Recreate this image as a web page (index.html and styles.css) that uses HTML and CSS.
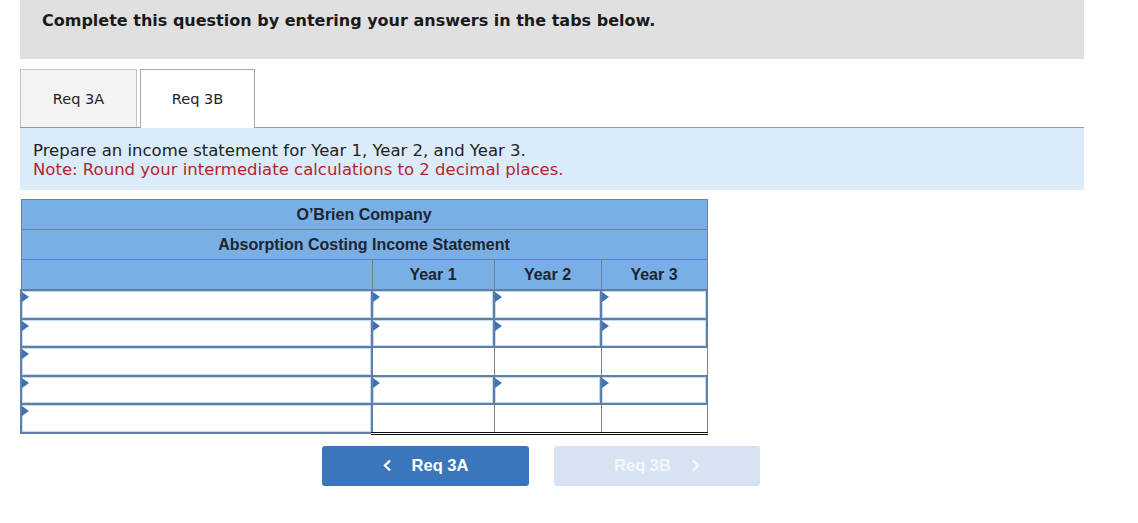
FILE: index.html
```html
<!DOCTYPE html>
<html>
<head>
<meta charset="utf-8">
<link rel="stylesheet" href="styles.css">
</head>
<body>
<div class="page">
  <div class="banner">Complete this question by entering your answers in the tabs below.</div>
  <div class="tabs">
    <div class="tab">Req 3A</div>
    <div class="tab active">Req 3B</div>
  </div>
  <div class="prompt">
    <div>Prepare an income statement for Year 1, Year 2, and Year 3.</div>
    <div class="note">Note: Round your intermediate calculations to 2 decimal places.</div>
  </div>
  <table class="stmt">
    <colgroup>
      <col class="c-label"><col class="c-y1"><col class="c-y2"><col class="c-y3">
    </colgroup>
    <tr class="hdr"><th colspan="4">O’Brien Company</th></tr>
    <tr class="hdr"><th colspan="4">Absorption Costing Income Statement</th></tr>
    <tr class="hdr"><th></th><th>Year 1</th><th>Year 2</th><th>Year 3</th></tr>
    <tr>
      <td class="inp"><span class="flag"></span></td>
      <td class="inp"><span class="flag"></span></td>
      <td class="inp"><span class="flag"></span></td>
      <td class="inp"><span class="flag"></span></td>
    </tr>
    <tr>
      <td class="inp"><span class="flag"></span></td>
      <td class="inp"><span class="flag"></span></td>
      <td class="inp"><span class="flag"></span></td>
      <td class="inp"><span class="flag"></span></td>
    </tr>
    <tr class="plain">
      <td class="inp"><span class="flag"></span></td>
      <td class="cell"></td>
      <td class="cell"></td>
      <td class="cell"></td>
    </tr>
    <tr>
      <td class="inp"><span class="flag"></span></td>
      <td class="inp"><span class="flag"></span></td>
      <td class="inp"><span class="flag"></span></td>
      <td class="inp"><span class="flag"></span></td>
    </tr>
    <tr class="plain total">
      <td class="inp"><span class="flag"></span></td>
      <td class="cell"></td>
      <td class="cell"></td>
      <td class="cell"></td>
    </tr>
  </table>
  <div class="nav">
    <button class="btn prev"><svg class="chev" width="9" height="13" viewBox="0 0 9 13"><path d="M7 1.5 L2 6.5 L7 11.5" fill="none" stroke="currentColor" stroke-width="2.4"/></svg>Req 3A</button>
    <button class="btn next">Req 3B<svg class="chev" width="9" height="13" viewBox="0 0 9 13"><path d="M2 1.5 L7 6.5 L2 11.5" fill="none" stroke="currentColor" stroke-width="2.4"/></svg></button>
  </div>
</div>
</body>
</html>
```
FILE: styles.css
```css
html, body {
  margin: 0;
  padding: 0;
  background: #ffffff;
}
.page {
  margin-left: 20px;
  width: 1064px;
  font-family: "DejaVu Sans", Verdana, sans-serif;
  color: #222;
}
.banner {
  background: #e0e0e0;
  height: 59px;
  box-sizing: border-box;
  padding: 10px 0 0 22px;
  font-weight: bold;
  font-size: 16px;
  line-height: 21px;
  color: #1a1a1a;
}
.tabs {
  margin-top: 10px;
  display: flex;
  gap: 3px;
  border-bottom: 1px solid #9a9a9a;
  height: 58px;
}
.tab {
  width: 117px;
  box-sizing: border-box;
  height: 58px;
  border: 1px solid #c4c4c4;
  border-bottom: none;
  background: #f3f3f3;
  font-size: 14.5px;
  display: flex;
  align-items: center;
  justify-content: center;
  color: #222;
}
.tab.active {
  width: 115px;
  background: #ffffff;
  border-color: #a8a8a8;
  height: 59px;
  margin-bottom: -1px;
}
.prompt {
  background: #dbebf9;
  height: 62px;
  box-sizing: border-box;
  padding: 13px 0 0 13px;
  font-size: 16.5px;
  line-height: 19px;
  color: #222;
}
.note {
  color: #b3262a;
}
.stmt {
  margin-top: 9px;
  border-collapse: collapse;
  width: 686px;
  table-layout: fixed;
  font-family: "Liberation Sans", Arial, sans-serif;
}
.c-label { width: 351px; }
.c-y1 { width: 122px; }
.c-y2 { width: 107px; }
.c-y3 { width: 106px; }
.hdr th {
  background: #7aafe5;
  border: 1px solid #6f8396;
  height: 29px;
  padding: 0;
  line-height: 18px;
  font-size: 16px;
  font-weight: bold;
  color: #1c2530;
  text-align: center;
  vertical-align: middle;
}
.stmt td {
  height: 26.5px;
  padding: 0;
  position: relative;
}
.stmt td.inp {
  border: 2px solid #5f7fa6;
  box-shadow: inset 0 0 0 1px #c2dbf4;
  background: #fff;
}
.stmt td.cell {
  border-left: 1px solid #808080;
  border-right: 1px solid #808080;
  border-top: 1px solid #111;
  border-bottom: 1px solid #111;
  background: #fff;
}
.total td.cell {
  border-bottom: 3px double #111;
}
.flag {
  position: absolute;
  left: 0;
  top: 1px;
  width: 0;
  height: 0;
  border-top: 5px solid transparent;
  border-bottom: 5px solid transparent;
  border-left: 7px solid #3f73b5;
}
.nav {
  margin-top: 11px;
  margin-left: 302px;
  display: flex;
  gap: 25px;
}
.btn {
  width: 207px;
  height: 40px;
  border: none;
  border-radius: 3px;
  font-family: "Liberation Sans", Arial, sans-serif;
  font-weight: bold;
  font-size: 16.5px;
  color: #fff;
  display: flex;
  align-items: center;
  justify-content: center;
  gap: 20px;
  padding: 0;
}
.btn.prev {
  background: #3a76bb;
}
.btn.next {
  width: 206px;
  background: #d7e3f1;
  color: #f4f7fb;
}
.chev {
  display: block;
}
```
